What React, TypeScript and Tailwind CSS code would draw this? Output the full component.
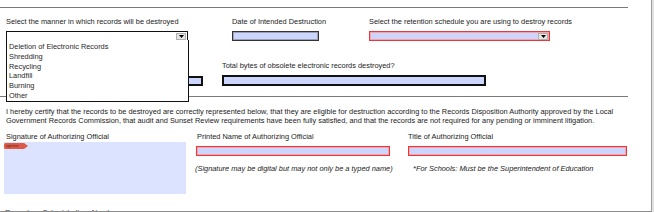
import React from "react";

function Arrow() {
  return (
    <div className="w-[10px] h-[7px] bg-[#e4e4e4] border border-[#b0b0b0] flex items-center justify-center">
      <svg width="5" height="3" viewBox="0 0 5 3">
        <polygon points="0,0 5,0 2.5,3" fill="#000" />
      </svg>
    </div>
  );
}

const items = [
  "Deletion of Electronic Records",
  "Shredding",
  "Recycling",
  "Landfill",
  "Burning",
  "Other",
];

export default function App() {
  return (
    <div className="w-[654px] h-[212px] overflow-hidden bg-white flex font-['Liberation_Sans',Arial,sans-serif] text-[7.4px] leading-[10px] text-[#222]">
      <div className="w-[651px] h-[212px] shrink-0 border-b border-[#8a8a8a] flex flex-col overflow-hidden">
        <div className="w-[628px] mt-[7px] h-[2px] border-t border-[#7a7a7a] bg-[#dcdcdc]" />

        {/* Row 1 */}
        <div className="flex mt-[9px]">
          <div className="ml-[6px] w-[182px] flex flex-col">
            <div className="whitespace-nowrap">Select the manner in which records will be destroyed</div>
            <div className="relative mt-[4px] h-[10px] bg-white border border-[#111] flex items-center justify-end pr-[1px] z-10">
              <Arrow />
              <div className="absolute left-[-1px] top-full w-[183px] h-[62px] bg-white border-x border-b border-[#111] pt-[2px] pl-[2px] text-[#1f1f2a] leading-[9.75px]">
                {items.map((t) => (
                  <div key={t} className="whitespace-nowrap">{t}</div>
                ))}
              </div>
            </div>
          </div>
          <div className="ml-[44px] w-[87px] flex flex-col">
            <div className="whitespace-nowrap">Date of Intended Destruction</div>
            <div className="mt-[4px] h-[10px] bg-[#ccd5fb] border border-[#333] shadow-[inset_0_0_0_1px_#9aa0b8]" />
          </div>
          <div className="ml-[50px] w-[181px] flex flex-col">
            <div className="whitespace-nowrap">Select the retention schedule you are using to destroy records</div>
            <div className="mt-[4px] h-[10px] bg-[#ccd5fb] border border-[#e8383d] shadow-[inset_0_0_0_1px_#f4a3ab] flex items-center justify-end pr-[1px]">
              <Arrow />
            </div>
          </div>
        </div>

        {/* Row 2 */}
        <div className="flex mt-[20px]">
          <div className="ml-[120px] w-[83px] flex flex-col">
            <div className="h-[10px]" />
            <div className="mt-[5px] h-[10px] bg-[#ccd5fb] border-2 border-[#111]" />
          </div>
          <div className="ml-[19px] w-[264px] flex flex-col">
            <div className="whitespace-nowrap">Total bytes of obsolete electronic records destroyed?</div>
            <div className="mt-[4px] h-[11px] bg-[#ccd5fb] border-2 border-[#111]" />
          </div>
        </div>

        <div className="w-[628px] mt-[10px] h-[2px] border-t border-[#7a7a7a] bg-[#dcdcdc]" />

        {/* Certification */}
        <div className="mt-[10px] ml-[6px] leading-[9px] whitespace-nowrap text-[#1a1a1a]">
          I hereby certify that the records to be destroyed are correctly represented below, that they are eligible for destruction according to the Records Disposition Authority approved by the Local
          <br />
          Government Records Commission, that audit and Sunset Review requirements have been fully satisfied, and that the records are not required for any pending or imminent litigation.
        </div>

        {/* Signature row */}
        <div className="flex mt-[7px]">
          <div className="ml-[4px] w-[182px] flex flex-col">
            <div className="pl-[2px] whitespace-nowrap">Signature of Authorizing Official</div>
            <div className="relative h-[52px] bg-[#dce3fe]">
              <div className="absolute left-0 top-[1px] w-[24px] h-[6px]">
                <svg width="24" height="6" viewBox="0 0 24 6" className="absolute inset-0">
                  <path d="M1.5 0 H20 L24 3 L20 6 H1.5 Q0 6 0 4.5 V1.5 Q0 0 1.5 0 Z" fill="#dd5a48" />
                </svg>
                <div className="absolute left-[2px] top-[1.5px] text-[3px] leading-[3px] text-[#4a1a14] whitespace-nowrap">sign here</div>
              </div>
            </div>
          </div>
          <div className="ml-[10px] w-[194px] flex flex-col">
            <div className="pl-[1px] whitespace-nowrap">Printed Name of Authorizing Official</div>
            <div className="mt-[4px] h-[10px] bg-[#ccd5fb] border border-[#e8383d] shadow-[inset_0_0_0_1px_#f4a3ab]" />
            <div className="mt-[8px] -ml-[1px] italic whitespace-nowrap">(Signature may be digital but may not only be a typed name)</div>
          </div>
          <div className="ml-[18px] w-[219px] flex flex-col">
            <div className="whitespace-nowrap">Title of Authorizing Official</div>
            <div className="mt-[4px] h-[10px] bg-[#ccd5fb] border border-[#e8383d] shadow-[inset_0_0_0_1px_#f4a3ab]" />
            <div className="mt-[8px] pl-[5px] italic whitespace-nowrap">*For Schools: Must be the Superintendent of Education</div>
          </div>
        </div>

        <div className="flex mt-[14px] ml-[5px] gap-[10px] text-[#444] whitespace-nowrap">
          <span>Records</span>
          <span>Schedule Item Number</span>
        </div>
      </div>
      <div className="w-[3px] h-[212px] shrink-0 border-l border-[#9a9a9a] bg-[#e2e2e2]" />
    </div>
  );
}
